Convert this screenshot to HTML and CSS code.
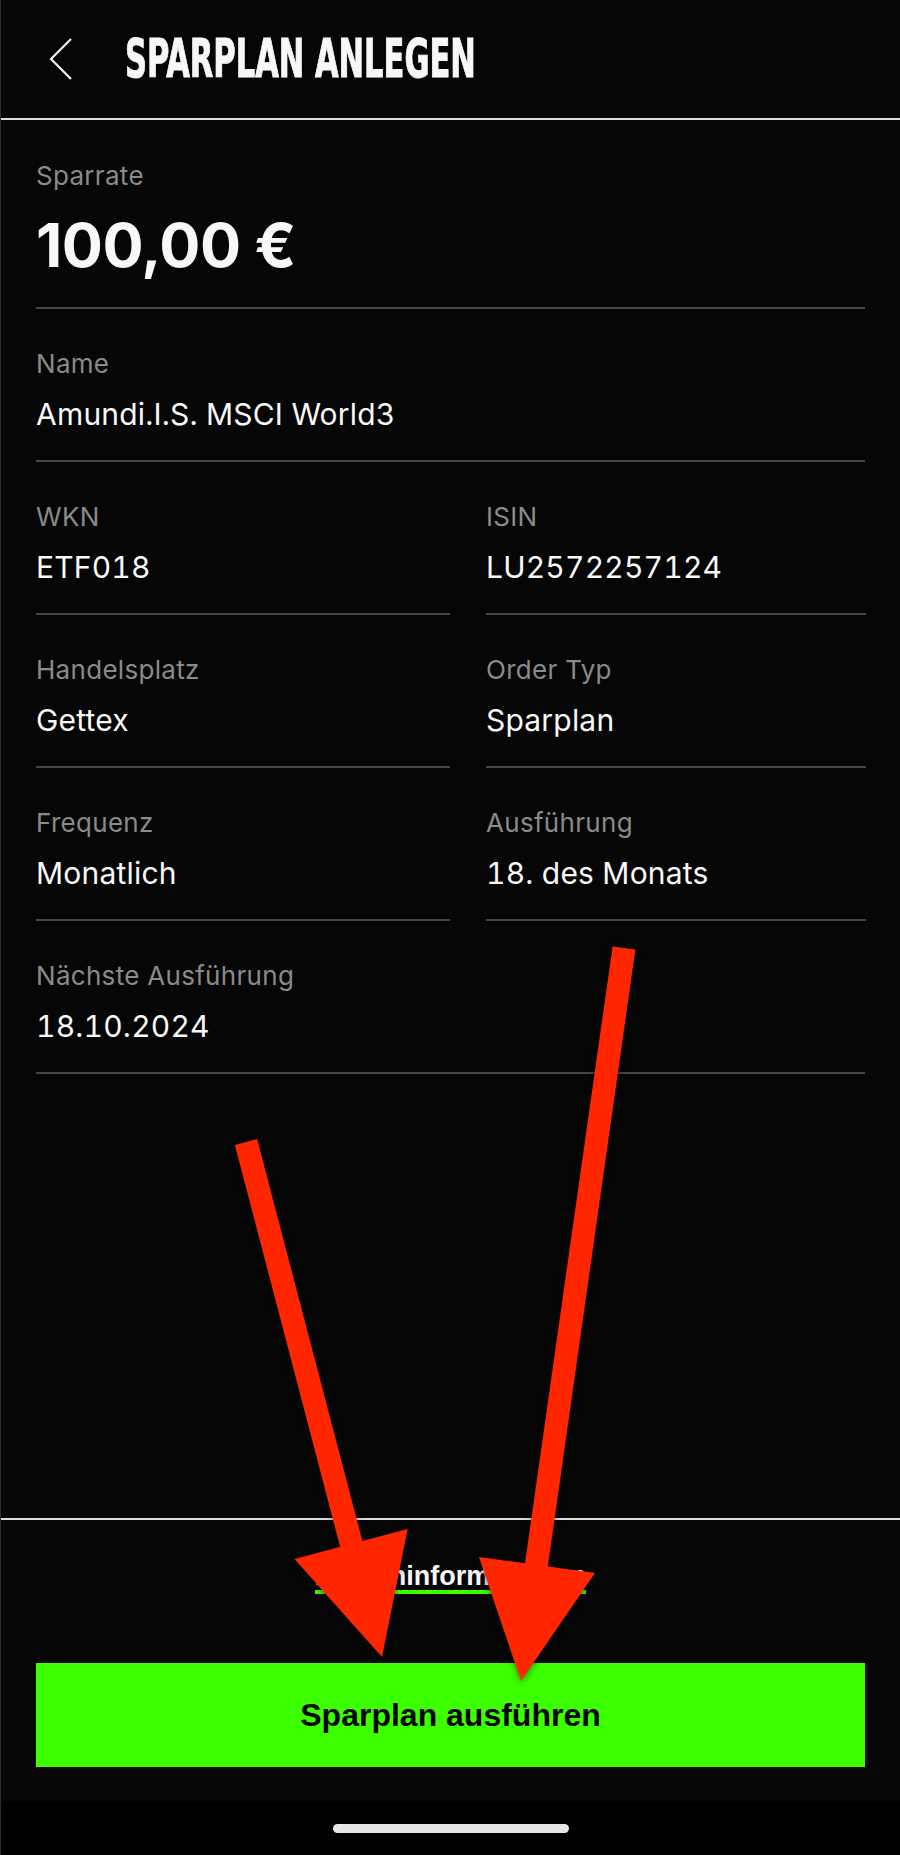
FILE: index.html
```html
<!DOCTYPE html>
<html lang="de">
<head>
    <meta charset="UTF-8">
    <title>Sparplan anlegen</title>
    <link rel="stylesheet" href="styles.css">
</head>
<body>
<div class="screen">

    <div class="topbar">
        <svg class="back" width="24" height="42" viewBox="0 0 24 42">
            <polyline points="22,1 2,21 22,41" fill="none" stroke="#f2f2f2" stroke-width="2.2"/>
        </svg>
        <h1><span>SPARPLAN ANLEGEN</span></h1>
    </div>

    <div class="content">
        <div class="field field_big">
            <div class="label">Sparrate</div>
            <div class="value">100,00 €</div>
        </div>
        <div class="field">
            <div class="label">Name</div>
            <div class="value">Amundi.I.S. MSCI World3</div>
        </div>
        <div class="pair">
            <div class="field">
                <div class="label">WKN</div>
                <div class="value">ETF018</div>
            </div>
            <div class="field">
                <div class="label">ISIN</div>
                <div class="value">LU2572257124</div>
            </div>
        </div>
        <div class="pair">
            <div class="field">
                <div class="label">Handelsplatz</div>
                <div class="value">Gettex</div>
            </div>
            <div class="field">
                <div class="label">Order Typ</div>
                <div class="value">Sparplan</div>
            </div>
        </div>
        <div class="pair">
            <div class="field">
                <div class="label">Frequenz</div>
                <div class="value">Monatlich</div>
            </div>
            <div class="field">
                <div class="label">Ausführung</div>
                <div class="value">18. des Monats</div>
            </div>
        </div>
        <div class="field">
            <div class="label">Nächste Ausführung</div>
            <div class="value">18.10.2024</div>
        </div>
    </div>

    <div class="footer">
        <div class="info"><a href="#">Kosteninformationen</a></div>
        <div class="btn">Sparplan ausführen</div>
    </div>
    <div class="homebar"><div class="indicator"></div></div>

    <!-- red annotation arrows over the screenshot -->
    <svg class="arrows" width="900" height="1855" viewBox="0 0 900 1855">
        <g fill="#ff2600" stroke="#ff2600">
            <line x1="246" y1="1142" x2="362" y2="1585" stroke-width="23"/>
            <polygon points="294.5,1559 407.6,1529 382,1657" stroke="none"/>
            <line x1="624" y1="948" x2="530" y2="1610" stroke-width="23"/>
            <polygon points="479,1557 595,1573 521,1681" stroke="none"/>
        </g>
    </svg>
</div>
</body>
</html>
```

FILE: styles.css
```css
body{
    margin:0;
    background:#060606;
    font-family:"Liberation Sans", Arial, sans-serif;
}
.screen{
    position:relative;
    width:899px;
    min-height:1855px;
    border-left:1px solid #2c2c2c;
    display:flex;
    flex-direction:column;
}
.topbar{
    height:118px;
    border-bottom:2px solid #dcdcdc;
    display:flex;
    align-items:center;
    padding-left:48px;
}
.back{
    display:block;
}
h1{
    margin:0 0 0 52px;
    font-size:53px;
    line-height:60px;
    color:#f7f7f7;
    font-family:"DejaVu Sans Condensed", "DejaVu Sans", sans-serif;
    font-stretch:condensed;
    font-weight:700;
}
h1 span{
    display:inline-block;
    transform:scaleX(.64);
    transform-origin:left center;
    -webkit-text-stroke:1px #f7f7f7;
}
.content{
    flex:1;
    padding:0 35px;
}
.field{
    padding:39px 0 28px;
    border-bottom:2px solid #464646;
}
.label{
    font-family:Inter, "Liberation Sans", sans-serif;
    font-size:26px;
    line-height:32px;
    color:#8a8a8a;
    letter-spacing:0.3px;
}
.value{
    margin-top:16px;
    font-family:Inter, "Liberation Sans", sans-serif;
    font-size:30px;
    line-height:36px;
    color:#f8f8f8;
    letter-spacing:0.2px;
    font-variant-numeric:tabular-nums;
}
.field_big{
    padding:40px 0 26px;
}
.field_big .value{
    margin-top:17px;
    font-size:61px;
    line-height:72px;
    font-weight:700;
    letter-spacing:-0.5px;
    font-variant-numeric:normal;
}
.pair{
    display:grid;
    grid-template-columns:414px 380px;
    column-gap:36px;
}
.footer{
    border-top:2px solid #dcdcdc;
    padding:42px 35px 35px;
}
.info{
    text-align:center;
}
.info a{
    display:inline-block;
    font-size:27px;
    line-height:28px;
    font-weight:700;
    color:#f8f8f8;
    text-decoration:none;
    border-bottom:4px solid #3cff00;
}
.btn{
    margin-top:69px;
    height:104px;
    background:#3cff00;
    color:#050505;
    font-size:32px;
    font-weight:700;
    display:flex;
    align-items:center;
    justify-content:center;
}
.homebar{
    height:53px;
    background:#000;
    display:flex;
    justify-content:center;
}
.indicator{
    margin-top:22px;
    width:236px;
    height:9px;
    border-radius:5px;
    background:#e6e6e6;
}
.arrows{
    position:absolute;
    left:-1px;
    top:0;
    pointer-events:none;
    filter:drop-shadow(0 2px 3px rgba(0,0,0,.45));
}
```
